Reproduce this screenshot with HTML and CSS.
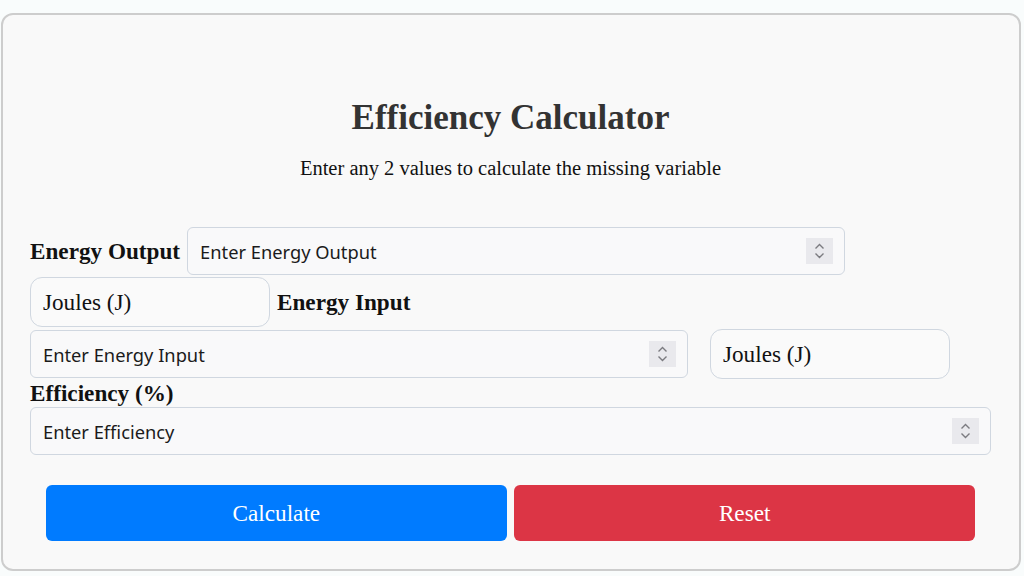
FILE: index.html
```html
<!DOCTYPE html>
<html lang="en">
<head>
    <meta charset="UTF-8">
    <meta name="viewport" content="width=device-width, initial-scale=1.0">
    <title>Efficiency Calculator</title>
    <link rel="stylesheet" href="styles.css">
</head>
<body>

    <!-- Calculator Card -->
    <div class="calculator">
        <h1>Efficiency Calculator</h1>
        <p class="intro">Enter any 2 values to calculate the missing variable</p>

        <form class="calc-form" id="efficiencyForm">
            <label for="energyOutput">Energy Output</label>
            <div class="field">
                <input type="number" id="energyOutput" placeholder="Enter Energy Output">
                <span class="spin"><svg width="27" height="26" viewBox="0 0 27 26"><path d="M9.5 10.5 L13.5 6.5 L17.5 10.5 M9.5 15.5 L13.5 19.5 L17.5 15.5" fill="none" stroke="#7b7b80" stroke-width="1.4"/></svg></span>
            </div>
            <select class="unit" id="outputUnit">
                <option>Joules (J)</option>
                <option>Kilojoules (kJ)</option>
            </select>

            <label for="energyInput">Energy Input</label>
            <div class="field">
                <input type="number" id="energyInput" placeholder="Enter Energy Input">
                <span class="spin"><svg width="27" height="26" viewBox="0 0 27 26"><path d="M9.5 10.5 L13.5 6.5 L17.5 10.5 M9.5 15.5 L13.5 19.5 L17.5 15.5" fill="none" stroke="#7b7b80" stroke-width="1.4"/></svg></span>
            </div>
            <select class="unit" id="inputUnit">
                <option>Joules (J)</option>
                <option>Kilojoules (kJ)</option>
            </select>

            <label for="efficiency">Efficiency (%)</label>
            <div class="field wide">
                <input type="number" id="efficiency" placeholder="Enter Efficiency">
                <span class="spin"><svg width="27" height="26" viewBox="0 0 27 26"><path d="M9.5 10.5 L13.5 6.5 L17.5 10.5 M9.5 15.5 L13.5 19.5 L17.5 15.5" fill="none" stroke="#7b7b80" stroke-width="1.4"/></svg></span>
            </div>
        </form>

        <div class="actions">
            <button type="button" class="btn calc-btn">Calculate</button>
            <button type="button" class="btn reset-btn">Reset</button>
        </div>
    </div>

</body>
</html>
```

FILE: styles.css
```css
/* Basic Reset */
* {
    box-sizing: border-box;
}

body {
    margin: 13px 0 0 1px;
    font-family: 'Liberation Serif', 'Times New Roman', serif;
    background: #f9fcfc;
    color: #111;
}

/* Card */
.calculator {
    width: 1020px;
    background: #f9f9f9;
    border: 2px solid #cdcdcd;
    border-radius: 12px;
    padding: 83px 28px 28px 27px;
}

.calculator h1 {
    margin: 0;
    font-size: 35px;
    line-height: 40px;
    color: #333;
    text-align: center;
}

.intro {
    margin: 18px 0 47px;
    font-size: 20.5px;
    line-height: 24px;
    text-align: center;
}

/* Form rows */
.calc-form {
    display: flex;
    flex-wrap: wrap;
    align-items: center;
    column-gap: 7px;
    row-gap: 2px;
}

.calc-form label {
    font-size: 23.2px;
    font-weight: bold;
    line-height: 24px;
}

.field {
    display: flex;
    align-items: center;
    width: 658px;
    height: 48px;
    margin-right: 15px;
    padding: 0 11px 0 12px;
    background: #f9f9fa;
    border: 1px solid #d0d7e0;
    border-radius: 6px;
}

.field.wide {
    width: 100%;
    margin-right: 0;
}

.field input {
    flex: 1;
    min-width: 0;
    border: none;
    outline: none;
    background: transparent;
    padding: 0;
    font-family: 'Noto Sans', sans-serif;
    font-size: 18.3px;
    color: #111;
    -moz-appearance: textfield;
}

.field input::placeholder {
    color: #1b1b1b;
    opacity: 1;
}

.field input::-webkit-inner-spin-button,
.field input::-webkit-outer-spin-button {
    -webkit-appearance: none;
    margin: 0;
}

.spin {
    display: flex;
    background: #e9e9ed;
}

.unit {
    -webkit-appearance: none;
    appearance: none;
    width: 240px;
    height: 50px;
    padding: 0 12px;
    background: #fafafa;
    border: 1px solid #d0d7e0;
    border-radius: 12px;
    font-family: 'Liberation Serif', 'Times New Roman', serif;
    font-size: 23.2px;
    color: #111;
}

/* Buttons */
.actions {
    display: flex;
    justify-content: center;
    gap: 7px;
    margin-top: 30px;
}

.btn {
    width: 48%;
    height: 56px;
    border: none;
    border-radius: 6px;
    color: #fff;
    font-family: 'Liberation Serif', 'Times New Roman', serif;
    font-size: 23.2px;
    cursor: pointer;
}

.calc-btn {
    background: #007bff;
}

.reset-btn {
    background: #dc3545;
}
```
